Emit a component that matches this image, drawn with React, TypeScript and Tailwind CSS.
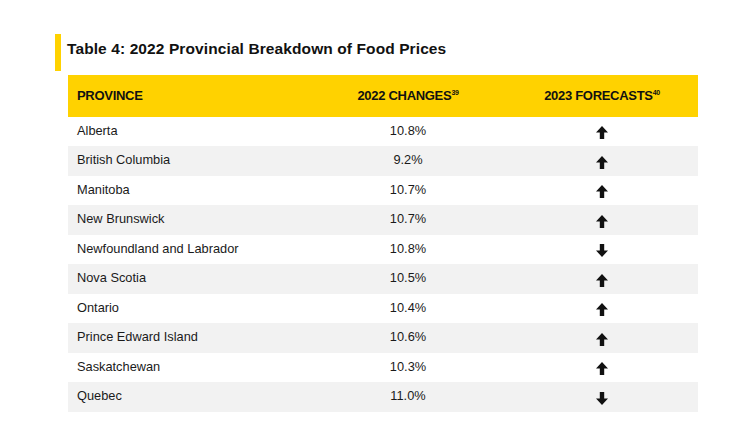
const ROWS: { province: string; change: string; up: boolean }[] = [
  { province: "Alberta", change: "10.8%", up: true },
  { province: "British Columbia", change: "9.2%", up: true },
  { province: "Manitoba", change: "10.7%", up: true },
  { province: "New Brunswick", change: "10.7%", up: true },
  { province: "Newfoundland and Labrador", change: "10.8%", up: false },
  { province: "Nova Scotia", change: "10.5%", up: true },
  { province: "Ontario", change: "10.4%", up: true },
  { province: "Prince Edward Island", change: "10.6%", up: true },
  { province: "Saskatchewan", change: "10.3%", up: true },
  { province: "Quebec", change: "11.0%", up: false },
];

function Arrow({ up }: { up: boolean }) {
  return (
    <svg
      width="12"
      height="13"
      viewBox="0 0 12 13"
      className={up ? "" : "rotate-180"}
    >
      <path d="M6 0 L12 6.5 L8.2 6.5 L8.2 13 L3.8 13 L3.8 6.5 L0 6.5 Z" fill="#111" />
    </svg>
  );
}

export default function App() {
  return (
    <div
      className="w-[751px] h-[431px] bg-white pt-[34px] pl-[55px]"
      style={{ fontFamily: '"Liberation Sans", Arial, sans-serif' }}
    >
      {/* Title */}
      <div className="flex items-stretch h-[37px]">
        <div className="w-[6px] bg-[#ffd200]" />
        <h1 className="ml-[6px] pt-[5px] text-[15.5px] font-bold text-[#111] leading-[20px] tracking-[0.1px]">
          Table 4: 2022 Provincial Breakdown of Food Prices
        </h1>
      </div>

      {/* Table */}
      <div className="ml-[13px] mt-[4px] w-[630px]">
        <div className="flex items-center h-[42px] bg-[#ffd200] text-[13px] font-bold text-[#111] tracking-[-0.3px]">
          <div className="w-[242px] pl-[9px]">PROVINCE</div>
          <div className="w-[196px] text-center">
            2022 CHANGES<sup className="text-[7px] relative -top-[5px]">39</sup>
          </div>
          <div className="w-[192px] text-center">
            2023 FORECASTS<sup className="text-[7px] relative -top-[5px]">40</sup>
          </div>
        </div>
        {ROWS.map((r, i) => (
          <div
            key={r.province}
            className={`flex items-center text-[12.8px] text-[#1a1a1a] ${
              i % 2 === 1 ? "bg-[#f2f2f2] h-[30px]" : "bg-white h-[29px]"
            }`}
          >
            <div className="w-[242px] pl-[9px] pb-[2px]">{r.province}</div>
            <div className="w-[196px] text-center pb-[2px]">{r.change}</div>
            <div className="w-[192px] flex justify-center pt-[2px]">
              <Arrow up={r.up} />
            </div>
          </div>
        ))}
      </div>
    </div>
  );
}
